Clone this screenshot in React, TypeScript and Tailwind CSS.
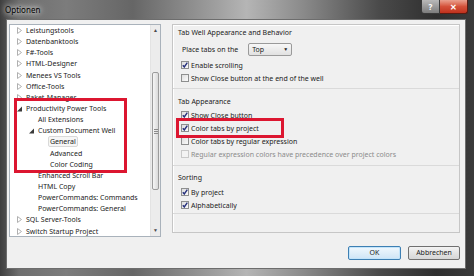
import React from "react";

type Node = { label: string; level: number; arrow?: "closed" | "open"; selected?: boolean };

const tree: Node[] = [
  { label: "Leistungstools", level: 0, arrow: "closed" },
  { label: "Datenbanktools", level: 0, arrow: "closed" },
  { label: "F#-Tools", level: 0, arrow: "closed" },
  { label: "HTML-Designer", level: 0, arrow: "closed" },
  { label: "Menees VS Tools", level: 0, arrow: "closed" },
  { label: "Office-Tools", level: 0, arrow: "closed" },
  { label: "Paket-Manager", level: 0, arrow: "closed" },
  { label: "Productivity Power Tools", level: 0, arrow: "open" },
  { label: "All Extensions", level: 1 },
  { label: "Custom Document Well", level: 1, arrow: "open" },
  { label: "General", level: 2, selected: true },
  { label: "Advanced", level: 2 },
  { label: "Color Coding", level: 2 },
  { label: "Enhanced Scroll Bar", level: 1 },
  { label: "HTML Copy", level: 1 },
  { label: "PowerCommands: Commands", level: 1 },
  { label: "PowerCommands: General", level: 1 },
  { label: "SQL Server-Tools", level: 0, arrow: "closed" },
  { label: "Switch Startup Project", level: 0, arrow: "closed" },
];

const pad = ["pl-[7px]", "pl-[19px]", "pl-[31px]"];

function Arrow({ kind }: { kind?: "closed" | "open" }) {
  return (
    <span className="flex w-[9px] items-center">
      {kind === "closed" && (
        <svg width="5" height="7" viewBox="0 0 5 7">
          <polygon points="0.5,0.5 4.5,3.5 0.5,6.5" fill="#fff" stroke="#b0b0b0" strokeWidth="1" />
        </svg>
      )}
      {kind === "open" && (
        <svg width="5" height="6" viewBox="0 0 5 6">
          <polygon points="5,0.5 5,5.5 0,5.5" fill="#3a3a3a" />
        </svg>
      )}
    </span>
  );
}

function Check({ on, disabled }: { on?: boolean; disabled?: boolean }) {
  return (
    <span
      className={
        disabled
          ? "flex h-[8px] w-[8px] items-center justify-center border border-[#c9c9c9] bg-[#f3f3f3]"
          : "flex h-[8px] w-[8px] items-center justify-center border border-[#8e8f8f] bg-gradient-to-br from-[#dedede] to-[#fbfbfb]"
      }
    >
      {on && (
        <svg width="6" height="6" viewBox="0 0 6 6">
          <path d="M0.8 3.2 L2.3 5 L5.3 0.6" fill="none" stroke="#27317c" strokeWidth="1.4" />
        </svg>
      )}
    </span>
  );
}

function CheckRow({ label, on, disabled }: { label: string; on?: boolean; disabled?: boolean }) {
  return (
    <div className="flex h-[13px] items-center gap-[2px] pl-[8px]">
      <Check on={on} disabled={disabled} />
      <span className={disabled ? "text-[#8b8b8b]" : ""}>{label}</span>
    </div>
  );
}

export default function App() {
  return (
    <div
      className="flex h-[276px] w-[474px] flex-col overflow-hidden bg-[linear-gradient(90deg,#3e3e3e_0%,#6e6e6e_4%,#7c7c7c_14%,#666_28%,#9d9d9d_45%,#b5b5b5_52%,#8a8a8a_64%,#4a4a4a_80%,#2f2f2f_92%,#3a3a3a_100%)] text-[7px] leading-none text-[#1b1b1b]"
      style={{ fontFamily: '"Noto Sans", "Open Sans", sans-serif' }}
    >
      {/* title bar */}
      <div className="relative flex h-[19px] shrink-0 items-center pl-[5px]">
        <span className="text-[8px] text-black [text-shadow:0_0_5px_#fff,0_0_8px_#fff]">Optionen</span>
        <div className="absolute right-[6px] top-0 flex h-[14px]">
          <div className="flex w-[19px] items-center justify-center rounded-bl-[3px] border border-t-0 border-[#3a3a3a] bg-gradient-to-b from-[#b9b9b9] to-[#7d7d7d] text-[8px] font-bold text-white">
            ?
          </div>
          <div className="flex w-[28px] items-center justify-center rounded-br-[3px] border border-l-0 border-t-0 border-[#5a1b12] bg-gradient-to-b from-[#e9a08f] via-[#d4513a] to-[#c0301c] text-[8px] font-bold text-white">
            ✕
          </div>
        </div>
      </div>

      {/* client area */}
      <div className="ml-[6px] mr-[8px] flex h-[250px] shrink-0 flex-col border border-[#6d6d6d] bg-[#f0f0f0] pl-[2px] pr-[5px] pt-[4px]">
        <div className="flex h-[213px] items-start gap-[11px]">
          {/* tree */}
          <div className="relative flex h-[213px] w-[152px] border border-[#a9b2bb] bg-white">
            <div className="flex-1">
              {tree.map((n) => (
                <div key={n.label} className={`flex h-[11.15px] items-center ${pad[n.level]}`}>
                  <Arrow kind={n.arrow} />
                  {n.selected ? (
                    <span className="-ml-[2px] flex h-[11px] items-center rounded-[2px] border border-[#d9d9d9] bg-[#f6f6f6] px-[1px]">
                      {n.label}
                    </span>
                  ) : (
                    <span className="whitespace-nowrap">{n.label}</span>
                  )}
                </div>
              ))}
            </div>
            {/* scrollbar */}
            <div className="flex w-[10px] flex-col border-l border-[#e3e3e3] bg-[#ececec]">
              <div className="flex h-[11px] items-center justify-center text-[5px] text-[#4a4a4a]">▲</div>
              <div className="flex-1 px-[1px]">
                <div className="mt-[36px] flex h-[118px] items-center justify-center rounded-[2px] border border-[#9c9c9c] bg-gradient-to-r from-[#f6f6f6] to-[#dadada]">
                  <div className="flex flex-col gap-[1px]">
                    <div className="h-px w-[4px] bg-[#8a8a8a]" />
                    <div className="h-px w-[4px] bg-[#8a8a8a]" />
                    <div className="h-px w-[4px] bg-[#8a8a8a]" />
                  </div>
                </div>
              </div>
              <div className="flex h-[11px] items-center justify-center text-[5px] text-[#4a4a4a]">▼</div>
            </div>
            {/* red highlight */}
            <div className="absolute left-[4px] top-[73px] h-[75px] w-[113px] border-[3px] border-[#dc1630]" />
          </div>

          {/* right panel */}
          <div className="relative flex h-[209px] flex-1 flex-col border border-[#c6c6c6] shadow-[inset_1px_1px_0_#fff]">
            <div className="flex h-[64px] flex-col border-b border-[#dadada]">
              <div className="flex h-[14px] items-center pl-[5px]">Tab Well Appearance and Behavior</div>
              <div className="mt-[3px] flex h-[14px] items-center pl-[9px]">
                <span>Place tabs on the</span>
                <div className="ml-[10px] flex h-[13px] w-[44px] items-center justify-between rounded-[2px] border border-[#9a9a9a] bg-gradient-to-b from-[#f7f7f7] to-[#e1e1e1] pl-[3px] pr-[3px]">
                  <span>Top</span>
                  <span className="text-[5px] text-[#222]">▼</span>
                </div>
              </div>
              <div className="mt-[2.5px]" />
              <CheckRow label="Enable scrolling" on />
              <CheckRow label="Show Close button at the end of the well" />
            </div>
            <div className="flex h-[77px] flex-col border-b border-[#dadada]">
              <div className="mt-[5px] flex h-[14px] items-center pl-[5px]">Tab Appearance</div>
              <div className="mt-[0.5px]" />
              <CheckRow label="Show Close button" on />
              <CheckRow label="Color tabs by project" on />
              <CheckRow label="Color tabs by regular expression" />
              <CheckRow label="Regular expression colors have precedence over project colors" disabled />
            </div>
            <div className="flex h-[48px] flex-col border-b border-[#dadada]">
              <div className="mt-[4px] flex h-[14px] items-center pl-[5px]">Sorting</div>
              <div className="mt-[1.5px]" />
              <CheckRow label="By project" on />
              <CheckRow label="Alphabetically" on />
            </div>
            <div className="absolute left-[3px] top-[93px] h-[20px] w-[108px] border-[3px] border-[#dc1630]" />
          </div>
        </div>

        {/* buttons */}
        <div className="mt-[8.5px] flex justify-end gap-[7px]">
          <div className="flex h-[14px] w-[53px] items-center justify-center rounded-[2px] border border-[#3d7fb3] bg-gradient-to-b from-[#f1f8fd] to-[#cfe5f6] shadow-[inset_0_0_0_1px_#c3e4fa]">
            OK
          </div>
          <div className="flex h-[14px] w-[52px] items-center justify-center rounded-[2px] border border-[#707070] bg-gradient-to-b from-[#f3f3f3] to-[#d6d6d6]">
            Abbrechen
          </div>
        </div>
      </div>
    </div>
  );
}
